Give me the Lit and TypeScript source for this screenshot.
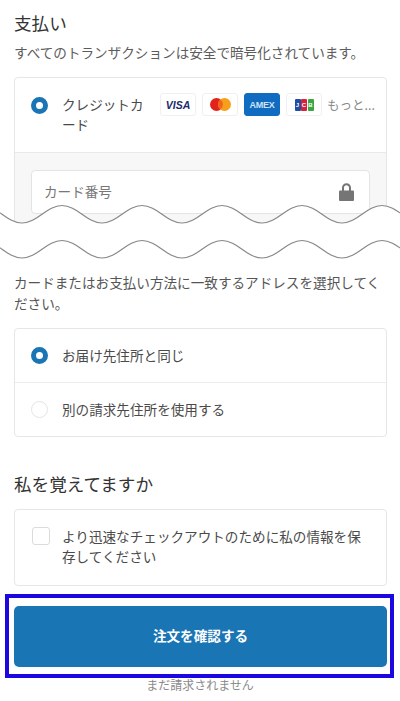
import { LitElement, html, css } from "lit";
import { customElement } from "lit/decorators.js";

const wavePath = (y: number) => {
  // period 80, peak at x = 62, trough at x = 22
  let d = `M-58 ${y + 17.5} `;
  for (let x = -58; x < 440; x += 80) {
    d += `C${x + 15} ${y + 17.5} ${x + 25} ${y} ${x + 40} ${y} S${x + 65} ${y + 17.5} ${x + 80} ${y + 17.5} `;
  }
  return d;
};

@customElement("app-root")
export class AppRoot extends LitElement {
  static styles = css`
    :host {
      display: block;
      width: 400px;
      height: 701px;
      overflow: hidden;
      background: #fff;
      font-family: "Noto Sans CJK JP", "Noto Sans", sans-serif;
      color: #4a4a4a;
      font-size: 13.6px;
    }
    .cut {
      height: 222px;
      overflow: hidden;
      padding: 0 13px 0 14px;
      box-sizing: border-box;
    }
    h2 {
      margin: 0;
      font-weight: 400;
      font-size: 17.6px;
      line-height: 24px;
      color: #333;
    }
    .cut h2 { padding-top: 11px; }
    .desc {
      margin: 7px 0 0;
      line-height: 20px;
      color: #5c5c5c;
    }
    .card {
      border: 1px solid #e6e6e6;
      border-radius: 4px;
      background: #fff;
    }
    .cut .card { margin-top: 15px; }
    .pay-row {
      display: flex;
      align-items: flex-start;
      padding: 15px 16px 0 16px;
      height: 75px;
      box-sizing: border-box;
      border-bottom: 1px solid #e9e9e9;
    }
    .radio {
      flex: none;
      width: 17px;
      height: 17px;
      border-radius: 50%;
      box-sizing: border-box;
      border: 5px solid #1a75b5;
      background: #fff;
    }
    .radio.off {
      border: 1px solid #e4e4e4;
    }
    .pay-row .radio { margin-top: 4px; }
    .pay-label {
      width: 87px;
      margin: 1px 0 0 14px;
      flex: none;
      line-height: 20px;
      color: #4a4a4a;
    }
    .logos {
      display: flex;
      gap: 6px;
      align-items: center;
      margin-left: 11px;
      height: 23px;
    }
    .logo {
      width: 36px;
      height: 23px;
      box-sizing: border-box;
      border: 1px solid #f0f0f0;
      border-radius: 3px;
      background: #fff;
      display: flex;
      align-items: center;
      justify-content: center;
      flex: none;
    }
    .visa {
      font: italic 700 10.5px "Liberation Sans", sans-serif;
      color: #1a2a6c;
    }
    .amex {
      background: #0f6cc0;
      border-color: #0f6cc0;
      font: 700 9px "Liberation Sans", sans-serif;
      color: #cfe3f7;
      letter-spacing: -0.2px;
    }
    .jcb {
      gap: 0.5px;
    }
    .jcb span {
      width: 6px;
      height: 12px;
      font: 700 6px/12px "Liberation Sans", sans-serif;
      color: #fff;
      text-align: center;
      border-radius: 1px;
    }
    .j { background: #1f4fa3; }
    .c { background: #d4213d; }
    .b { background: #3aa63f; }
    .more {
      font-size: 12.5px;
      color: #8a8a8a;
      margin-left: -1px;
      white-space: nowrap;
    }
    .pay-body {
      background: #f7f7f7;
      padding: 17px 16px 40px;
    }
    .input {
      height: 44px;
      box-sizing: border-box;
      border: 1px solid #e4e4e4;
      border-radius: 4px;
      background: #fff;
      display: flex;
      align-items: center;
      justify-content: space-between;
      padding: 0 15px 0 12px;
      color: #777;
    }
    .input span { padding-bottom: 3px; }
    .input svg { margin-top: -1px; }
    .tear {
      display: block;
      margin-top: -22px;
      position: relative;
    }
    .address {
      padding: 0 13px 0 14px;
    }
    .address p {
      margin: 12px 0 0;
      line-height: 21px;
      color: #555;
    }
    .address .card { margin-top: 14px; }
    .row {
      display: flex;
      align-items: center;
      gap: 14px;
      height: 53px;
      padding-left: 16px;
      box-sizing: border-box;
      color: #4a4a4a;
    }
    .row + .row {
      height: 54px;
      border-top: 1px solid #ececec;
    }
    .row span:last-child { margin-bottom: 2px; }
    .remember {
      padding: 0 13px 0 14px;
      margin-top: 35px;
    }
    .remember .card {
      margin-top: 13px;
      display: flex;
      align-items: flex-start;
      padding: 16px 16px 19px 17px;
      gap: 12px;
      line-height: 20px;
    }
    .check {
      flex: none;
      width: 18px;
      height: 18px;
      box-sizing: border-box;
      border: 1px solid #dcdcdc;
      border-radius: 3px;
      margin-top: 1px;
    }
    .focus {
      margin: 8px 6px 0 5px;
      border: 4px solid #1c07e0;
      padding: 8px 3px 7px 5px;
    }
    button {
      display: block;
      width: 100%;
      height: 61px;
      border: 0;
      border-radius: 5px;
      background: #1a75b5;
      color: #fff;
      font: 700 13.6px "Noto Sans CJK JP", sans-serif;
      padding: 0 0 3px;
    }
    .note {
      text-align: center;
      font-size: 12px;
      line-height: 14px;
      color: #8a8a8a;
    }
  `;

  render() {
    return html`
      <div class="cut">
        <h2>支払い</h2>
        <p class="desc">すべてのトランザクションは安全で暗号化されています。</p>
        <div class="card">
          <div class="pay-row">
            <span class="radio"></span>
            <span class="pay-label">クレジットカード</span>
            <div class="logos">
              <span class="logo visa">VISA</span>
              <span class="logo">
                <svg width="21" height="13" viewBox="0 0 21 13">
                  <circle cx="6.5" cy="6.5" r="6.5" fill="#e2231a"></circle>
                  <circle cx="14.5" cy="6.5" r="6.5" fill="#f79e1b"></circle>
                  <path d="M10.5 1.4a6.5 6.5 0 0 1 0 10.2a6.5 6.5 0 0 1 0-10.2z" fill="#f0641e"></path>
                </svg>
              </span>
              <span class="logo amex">AMEX</span>
              <span class="logo jcb">
                <span class="j">J</span><span class="c">C</span><span class="b">B</span>
              </span>
              <span class="more">もっと...</span>
            </div>
          </div>
          <div class="pay-body">
            <div class="input">
              <span>カード番号</span>
              <svg width="15" height="18" viewBox="0 0 15 18">
                <path d="M4 8V4.8a3.5 3.5 0 0 1 7 0V8" fill="none" stroke="#757575" stroke-width="2"></path>
                <rect x="0" y="7.5" width="15" height="10.5" rx="1" fill="#757575"></rect>
              </svg>
            </div>
          </div>
        </div>
      </div>

      <svg class="tear" width="400" height="60" viewBox="0 0 400 60">
        <path d="${wavePath(5.5)} L460 41 L-58 41 Z" fill="#fff"></path>
        <path d="${wavePath(5.5)}" fill="none" stroke="#888" stroke-width="1.2"></path>
        <path d="${wavePath(40.5)}" fill="none" stroke="#888" stroke-width="1.2"></path>
      </svg>

      <section class="address">
        <p>カードまたはお支払い方法に一致するアドレスを選択してください。</p>
        <div class="card">
          <div class="row"><span class="radio"></span><span>お届け先住所と同じ</span></div>
          <div class="row"><span class="radio off"></span><span>別の請求先住所を使用する</span></div>
        </div>
      </section>

      <section class="remember">
        <h2>私を覚えてますか</h2>
        <div class="card">
          <span class="check"></span>
          <span>より迅速なチェックアウトのために私の情報を保存してください</span>
        </div>
      </section>

      <div class="focus"><button>注文を確認する</button></div>
      <div class="note">まだ請求されません</div>
    `;
  }
}
